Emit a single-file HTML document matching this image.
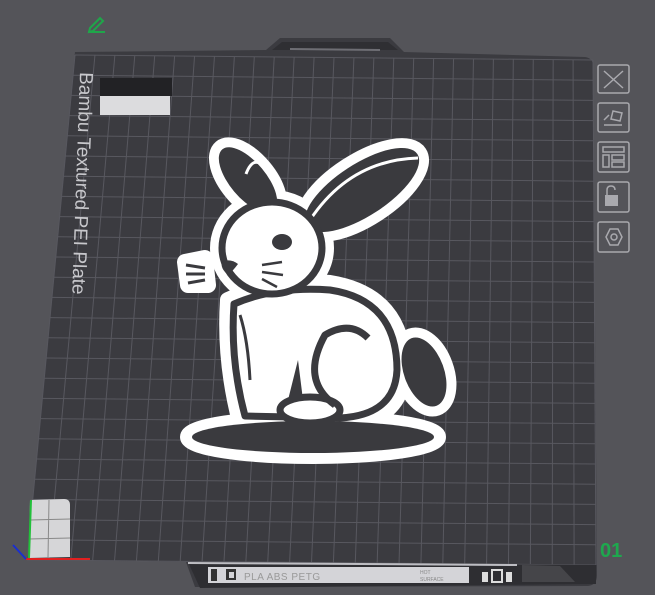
<!DOCTYPE html>
<html><head><meta charset="utf-8"><style>
html,body{margin:0;padding:0;background:#545459;width:655px;height:595px;overflow:hidden}
svg{display:block}
</style></head><body>
<svg id="s" width="655" height="595" viewBox="0 0 655 595" xmlns="http://www.w3.org/2000/svg">
<rect width="655" height="595" fill="#545459"/>
<path d="M75,52 L266,50 L280,38 L390,38 L404,52 L585,57 Q593,58 593,66 L597,575 Q597,585 588,586 L195,587 L186,562 L27,560 Z" fill="#3b3b40"/>
<path d="M272,50 L282,42 L388,42 L398,50 Z" fill="#2f2f33"/>
<line x1="290" y1="49" x2="380" y2="50" stroke="#6e6e74" stroke-width="2"/>
<g id="grid" stroke="#58585f" stroke-width="1" fill="none"></g>
<path d="M188,562 L596,565 L596,584 L200,588 Z" fill="#2e2e32"/>
<line x1="188" y1="563" x2="517" y2="565" stroke="#bdbdc2" stroke-width="2"/>
<rect x="208" y="567" width="261" height="16" fill="#d4d4d8"/>
<rect x="211" y="569" width="6" height="12" fill="#333"/>
<rect x="226" y="569" width="10" height="11" fill="#333"/>
<rect x="229" y="572" width="5" height="6" fill="#d4d4d8"/>
<text x="244" y="580" font-family="Liberation Sans, sans-serif" font-size="10" fill="#999" letter-spacing="0.5">PLA ABS PETG</text>
<text x="420" y="574" font-family="Liberation Sans, sans-serif" font-size="5" fill="#888">HOT</text>
<text x="420" y="581" font-family="Liberation Sans, sans-serif" font-size="5" fill="#888">SURFACE</text>
<rect x="482" y="572" width="6" height="10" fill="#ddd"/><rect x="492" y="570" width="10" height="12" fill="none" stroke="#ddd" stroke-width="2"/><rect x="506" y="572" width="6" height="10" fill="#ddd"/>
<path d="M522,565 L560,566 L575,582 L522,582 Z" fill="#454549"/>
<rect x="100" y="78" width="72" height="18" fill="#222225"/>
<rect x="100" y="96" width="70" height="19" fill="#dcdcde"/>
<text transform="translate(80,72) rotate(92)" font-family="Liberation Sans, sans-serif" font-size="19" fill="#c8c8cc">Bambu Textured PEI Plate</text>
<path d="M90,28 L100,18 L103,21 L93,31 L89,32 Z M88,32 L105,32" fill="none" stroke="#1fa64a" stroke-width="2"/>
<g fill="none" stroke="#a9a9ae" stroke-width="1.5">
<rect x="598" y="65" width="31" height="28" rx="2"/><path d="M604,71 L623,88 M623,71 L604,88"/>
<rect x="598" y="103" width="31" height="29" rx="2"/><path d="M604,125 L622,125 M613,111 L622,113 L620,121 L611,119 Z M604,120 L609,115"/>
<rect x="598" y="142" width="31" height="30" rx="2"/><rect x="603" y="147" width="21" height="5"/><rect x="603" y="155" width="6" height="12"/><rect x="612" y="155" width="12" height="5"/><rect x="612" y="162" width="12" height="5"/>
<rect x="598" y="182" width="31" height="30" rx="2"/><path d="M607,195 L607,190 Q607,186 611,186 Q615,186 615,190"/>
<rect x="598" y="222" width="31" height="30" rx="2"/><path d="M606,237 L610,229 L618,229 L622,237 L618,245 L610,245 Z"/><circle cx="614" cy="237" r="3"/>
</g>
<rect x="605" y="195" width="13" height="11" fill="#a9a9ae"/>
<text x="600" y="557" font-family="Liberation Sans, sans-serif" font-size="20" font-weight="bold" fill="#1ea84e">01</text>
<path d="M30,500 L64,499 Q70,499 70,505 L70,557 L29,558 Z" fill="#d6d6d8"/>
<path d="M49,500 L48,558 M30,520 L70,519 M29,539 L70,538" stroke="#888" stroke-width="1"/>
<line x1="29" y1="558" x2="31" y2="500" stroke="#22c03a" stroke-width="2"/>
<line x1="26" y1="559" x2="90" y2="559" stroke="#e02020" stroke-width="2"/>
<line x1="26" y1="559" x2="13" y2="545" stroke="#1a2fd0" stroke-width="2"/>
<g stroke-linejoin="round">
<g fill="#fff" stroke="#fff" stroke-width="16">
<ellipse cx="313" cy="437" rx="125" ry="19"/>
<ellipse cx="248" cy="180" rx="20" ry="42" transform="rotate(-40 248 180)"/>
<ellipse cx="362" cy="190" rx="28" ry="68" transform="rotate(57 362 190)"/>
<ellipse cx="424" cy="372" rx="22" ry="38" transform="rotate(-20 424 372)"/>
<path d="M228,300 Q275,278 330,283 Q404,295 404,370 Q402,422 340,425 L240,422 Q224,360 228,300 Z"/>
<ellipse cx="272" cy="248" rx="54" ry="50"/>
<path d="M185,262 L205,258 L208,285 L188,285 Z"/>
</g>
<g fill="#3a3a3e">
<ellipse cx="313" cy="437" rx="121" ry="16"/>
<ellipse cx="248" cy="180" rx="18" ry="40" transform="rotate(-40 248 180)"/>
<ellipse cx="362" cy="190" rx="26" ry="66" transform="rotate(57 362 190)"/>
<ellipse cx="424" cy="372" rx="20" ry="36" transform="rotate(-20 424 372)"/>
</g>
<path d="M246,174 Q255,150 270,175" fill="none" stroke="#fff" stroke-width="3"/>
<path d="M310,220 Q350,160 418,158" fill="none" stroke="#fff" stroke-width="3"/>
<g fill="#fff" stroke="#3a3a3e" stroke-width="7">
<path d="M234,304 Q275,286 330,290 Q397,300 397,370 Q395,415 340,418 L245,416 Q230,360 234,304 Z"/>
<ellipse cx="272" cy="248" rx="50" ry="46"/>
<ellipse cx="310" cy="410" rx="30" ry="13"/>
</g>
<path d="M335,405 Q300,380 325,335 Q350,320 368,338" fill="none" stroke="#3a3a3e" stroke-width="7"/>
<path d="M298,360 L288,400 L303,400 Z" fill="#3a3a3e"/>
<path d="M240,315 Q248,340 250,380" fill="none" stroke="#3a3a3e" stroke-width="3"/>
<ellipse cx="282" cy="242" rx="10" ry="8" fill="#3a3a3e"/>
<path d="M222,262 Q230,258 238,264 Q232,272 228,275 Q220,268 222,262 Z" fill="#3a3a3e"/>
<g stroke="#3a3a3e" stroke-width="2.5" fill="none"><path d="M262,265 L282,262 M262,272 L283,275 M262,279 L277,287"/></g>
<g stroke="#3a3a3e" stroke-width="3" fill="none"><path d="M186,265 L205,268 M186,274 L205,274 M188,283 L205,280"/></g>
</g>
</svg>
<script>
(function(){
var g=document.getElementById('grid'),h='';
var tL=[75,55],tR=[593,60],bL=[27,560],bR=[596,565];
var N=26,M=25;
for(var i=0;i<=N;i++){var t=i/N;
var x1=tL[0]+(tR[0]-tL[0])*t,y1=tL[1]+(tR[1]-tL[1])*t,x2=bL[0]+(bR[0]-bL[0])*t,y2=bL[1]+(bR[1]-bL[1])*t;
h+='<line x1="'+x1+'" y1="'+y1+'" x2="'+x2+'" y2="'+y2+'"/>';}
for(var j=0;j<=M;j++){var s=j/M;
var x1=tL[0]+(bL[0]-tL[0])*s,y1=tL[1]+(bL[1]-tL[1])*s,x2=tR[0]+(bR[0]-tR[0])*s,y2=tR[1]+(bR[1]-tR[1])*s;
h+='<line x1="'+x1+'" y1="'+y1+'" x2="'+x2+'" y2="'+y2+'"/>';}
g.innerHTML=h;})();
</script>
</body></html>
